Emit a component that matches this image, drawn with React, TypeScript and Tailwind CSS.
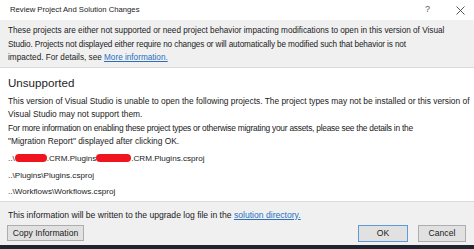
import React from 'react';

const font = { fontFamily: '"Liberation Sans", Arial, sans-serif' };

function Redacted({ w }: { w: number }) {
  return (
    <span
      className="inline-block h-[8px] rounded-full bg-[#f0141e] align-[-1px]"
      style={{ width: w }}
    />
  );
}

export default function App() {
  return (
    <div className="w-[474px] h-[249px] overflow-hidden bg-white text-[#1b1b1b] flex flex-col" style={font}>
      {/* title bar */}
      <div className="h-[20px] shrink-0 flex items-center justify-between pl-[10px] pr-[8px] text-[7.7px] text-[#222]">
        <span>Review Project And Solution Changes</span>
        <div className="flex items-center gap-[26px]">
          <span className="text-[9px] text-[#555]">?</span>
          <svg width="9" height="9" viewBox="0 0 9 9" className="mr-[1px]">
            <path d="M0.5 0.5 L8.5 8.5 M8.5 0.5 L0.5 8.5" stroke="#444" strokeWidth="0.9" />
          </svg>
        </div>
      </div>

      {/* info panel */}
      <div className="h-[48px] shrink-0 bg-[#f0f0f0] border-b border-[#dadada] px-[8px] pt-[4px] text-[8.2px] leading-[13.5px] whitespace-nowrap">
        <p>
          These projects are either not supported or need project behavior impacting modifications to open in this version of Visual
          <br />
          <span className="tracking-[-0.12px]">
            Studio. Projects not displayed either require no changes or will automatically be modified such that behavior is not
          </span>
          <br />
          impacted. For details, see <span className="text-[#2a6fc0] underline">More information.</span>
        </p>
      </div>

      {/* body */}
      <div className="flex-1 pl-[8px] pr-[4px] pt-[7px] whitespace-nowrap">
        <h2 className="text-[11.6px] leading-[16px] text-[#1e1e1e]">Unsupported</h2>
        <div className="mt-[4px] text-[8.4px] leading-[13.3px]">
          <p>
            This version of Visual Studio is unable to open the following projects. The project types may not be installed or this version of
            <br />
            Visual Studio may not support them.
          </p>
          <p>
            <span className="tracking-[-0.25px]">
              For more information on enabling these project types or otherwise migrating your assets, please see the details in the
            </span>
            <br />
            "Migration Report" displayed after clicking OK.
          </p>
        </div>
        <div className="mt-[3px] text-[8.1px] leading-[16.5px]">
          <p>
            ..\<Redacted w={32} />.CRM.Plugins<Redacted w={35} />.CRM.Plugins.csproj
          </p>
          <p>..\Plugins\Plugins.csproj</p>
          <p>..\Workflows\Workflows.csproj</p>
        </div>
      </div>

      {/* footer */}
      <div className="h-[44px] shrink-0 bg-[#f0f0f0] border-t border-[#dadada] pl-[7px] pr-[8px] flex flex-col">
        <p className="text-[8.6px] leading-[13px] mt-[7px] pl-[1px]">
          This information will be written to the upgrade log file in the{' '}
          <span className="text-[#2a6fc0] underline">solution directory.</span>
        </p>
        <div className="mt-[3px] flex items-center justify-between">
          <button className="h-[16px] w-[77px] bg-[#e1e1e1] border border-[#adadad] text-[8.6px] leading-none text-[#1b1b1b]">
            Copy Information
          </button>
          <div className="flex gap-[10px]">
            <button className="w-[50px] h-[17px] bg-[#e1e1e1] border border-[#5c9bd6] text-[8.6px] leading-none">
              OK
            </button>
            <button className="w-[48px] h-[17px] bg-[#e1e1e1] border border-[#adadad] text-[8.6px] leading-none">
              Cancel
            </button>
          </div>
        </div>
      </div>

      {/* taskbar strip */}
      <div className="h-[7px] shrink-0 bg-[#1f2431]" />
    </div>
  );
}
